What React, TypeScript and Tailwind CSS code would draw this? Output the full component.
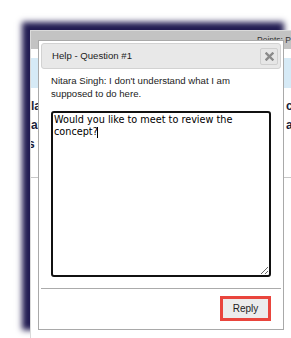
import React from "react";

function CloseIcon() {
  return (
    <svg width="9" height="9" viewBox="0 0 9 9">
      <path d="M1.5 1.5 L7.5 7.5 M7.5 1.5 L1.5 7.5" stroke="#8a8a8a" strokeWidth="2.4" strokeLinecap="square" />
    </svg>
  );
}

export default function App() {
  const sans = { fontFamily: '"Liberation Sans", Arial, sans-serif' } as const;
  return (
    <div className="relative w-[291px] h-[338px] overflow-hidden bg-white" style={sans}>
      {/* background window */}
      <div className="absolute left-[30px] top-[30px] w-[262px] h-[308px] bg-white border-l border-t border-[#dadada] shadow-[-8px_-8px_6px_#221c52] overflow-hidden flex flex-col">
        <div className="h-[18px] bg-[#c3c3c3] flex items-center pl-[226px] whitespace-nowrap text-[8.5px] text-[#333]">
          Points: Possible
        </div>
        <div className="h-[9px]" />
        <div className="h-[30px] bg-[#d6eaf6]" />
        <div className="mt-[9px] flex flex-col text-[12px] font-bold leading-[19px] text-[#1c1f3a] whitespace-nowrap">
          <div className="grid grid-cols-[255px_1fr]">
            <span>la</span>
            <span>cr</span>
          </div>
          <div className="grid grid-cols-[255px_1fr]">
            <span>ay</span>
            <span>at</span>
          </div>
          <div className="grid grid-cols-[255px_1fr]">
            <span className="ml-[-3px]">s y</span>
            <span></span>
          </div>
        </div>
        <div className="mt-[23px] h-px bg-[#c8c8c8]" />
      </div>

      {/* dialog */}
      <div className="absolute left-[38px] top-[40px] w-[246px] h-[290px] border border-[#a9a9a9] bg-white p-[2px] flex flex-col">
        <div className="h-[26px] shrink-0 border border-[#d2d2d2] bg-[#e8e8e8] rounded-[3px] flex items-center justify-between pl-[10px] pr-[2px]">
          <span className="text-[9.6px] text-[#222]">Help - Question #1</span>
          <div className="w-[18px] h-[17px] border border-[#cfcfcf] bg-[#e6e6e6] rounded-[2px] flex items-center justify-center">
            <CloseIcon />
          </div>
        </div>
        <div className="mt-[5px] px-[10px] text-[9.6px] leading-[13px] text-[#222]">
          Nitara Singh: I don't understand what I am supposed to do here.
        </div>
        <div className="mt-[11px] px-[10px] flex">
          <textarea
            className="w-[220px] h-[166px] border-2 border-[#111] rounded-[3px] px-[1px] py-[1px] text-[9.7px] leading-[12px] text-black bg-white outline-none"
            style={{ fontFamily: '"DejaVu Sans", Verdana, sans-serif' }}
            defaultValue="Would you like to meet to review the concept?"
            spellCheck={false}
          />
        </div>
        <div className="mt-[11px] h-px bg-[#ababab]" />
        <div className="mt-[7px] flex justify-end pr-[10px]">
          <div className="w-[51px] h-[25px] border-[3px] border-[#e9453d] bg-[#ececec] flex items-center justify-center text-[10px] text-[#222]">
            Reply
          </div>
        </div>
      </div>

      {/* text cursor */}
      <div className="absolute left-[97px] top-[127px] w-px h-[11px] bg-black" />
    </div>
  );
}
